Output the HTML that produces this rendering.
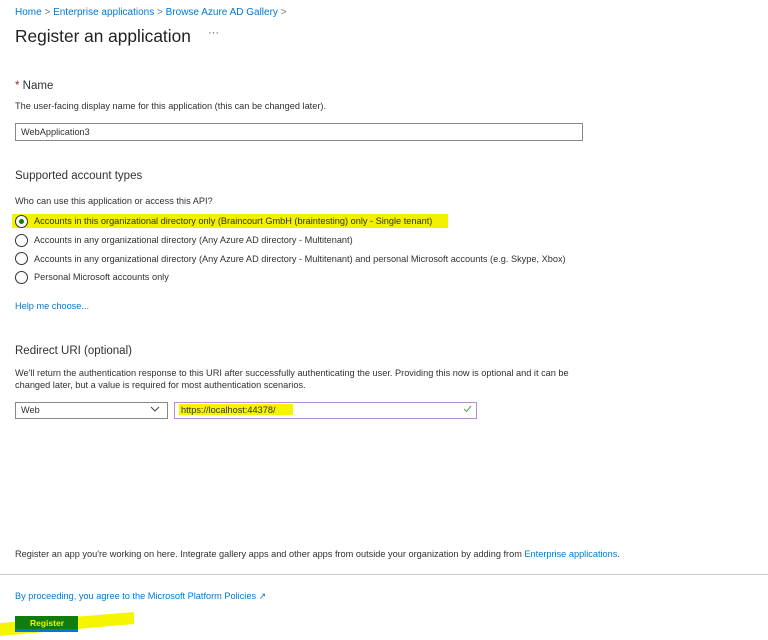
<!DOCTYPE html>
<html><head><meta charset="utf-8"><style>
body{margin:0;width:768px;height:640px;background:#fff;font-family:"Liberation Sans",sans-serif;color:#323130;position:relative;overflow:hidden}
.a{position:absolute;white-space:nowrap}
.s{font-size:9.2px}
.l{color:#0078d4}
.h{font-size:11.5px}
.r{position:absolute;left:15px;width:11px;height:11px;border:1px solid #323130;border-radius:50%}
</style></head><body>
<div class="a l" style="left:15px;top:7px;font-size:10px">Home <span style="color:#777">&gt;</span> Enterprise applications <span style="color:#777">&gt;</span> Browse Azure AD Gallery <span style="color:#777">&gt;</span></div>
<div class="a" style="left:15px;top:26px;font-size:17.3px;color:#222">Register an application</div>
<div class="a" style="left:208px;top:27px;font-size:11px;color:#555">···</div>
<div class="a h" style="left:15px;top:80px"><span style="color:#a4262c">*</span> Name</div>
<div class="a s" style="left:15px;top:101px">The user-facing display name for this application (this can be changed later).</div>
<div class="a" style="left:15px;top:123px;width:566px;height:16px;border:1px solid #8a8886"></div>
<div class="a s" style="left:21px;top:127px">WebApplication3</div>
<div class="a h" style="left:15px;top:170px">Supported account types</div>
<div class="a s" style="left:15px;top:196px">Who can use this application or access this API?</div>
<div class="a" style="left:12px;top:214px;width:436px;height:14px;background:#f2f200"></div>
<div class="r" style="top:215px;background:#fff"><div style="position:absolute;left:3px;top:3px;width:5px;height:5px;border-radius:50%;background:#107c10"></div></div>
<div class="a s" style="left:34px;top:216px">Accounts in this organizational directory only (Braincourt GmbH (braintesting) only - Single tenant)</div>
<div class="r" style="top:234px"></div>
<div class="a s" style="left:34px;top:235px">Accounts in any organizational directory (Any Azure AD directory - Multitenant)</div>
<div class="r" style="top:252px"></div>
<div class="a s" style="left:34px;top:254px">Accounts in any organizational directory (Any Azure AD directory - Multitenant) and personal Microsoft accounts (e.g. Skype, Xbox)</div>
<div class="r" style="top:271px"></div>
<div class="a s" style="left:34px;top:272px">Personal Microsoft accounts only</div>
<div class="a s l" style="left:15px;top:301px">Help me choose...</div>
<div class="a h" style="left:15px;top:345px">Redirect URI (optional)</div>
<div class="a s" style="left:15px;top:367px;line-height:12px">We'll return the authentication response to this URI after successfully authenticating the user. Providing this now is optional and it can be<br>changed later, but a value is required for most authentication scenarios.</div>
<div class="a" style="left:15px;top:402px;width:151px;height:15px;border:1px solid #8a8886"></div>
<div class="a s" style="left:21px;top:405px">Web</div>
<svg class="a" style="left:150px;top:406px" width="10" height="7"><path d="M1 1l4 4 4-4" fill="none" stroke="#444" stroke-width="1"/></svg>
<div class="a" style="left:174px;top:402px;width:301px;height:15px;border:1px solid #b98bd0"></div>
<div class="a" style="left:179px;top:404px;width:114px;height:11px;background:#f5f500"></div>
<div class="a s" style="left:181px;top:405px">https://localhost:44378/</div>
<svg class="a" style="left:463px;top:405px" width="9" height="8"><path d="M1 4l2.5 2.5L8 1" fill="none" stroke="#57a64a" stroke-width="1"/></svg>
<div class="a s" style="left:15px;top:549px">Register an app you're working on here. Integrate gallery apps and other apps from outside your organization by adding from <span class="l">Enterprise applications</span>.</div>
<div class="a" style="left:0;top:574px;width:768px;height:1px;background:#ccc"></div>
<div class="a s l" style="left:15px;top:591px">By proceeding, you agree to the Microsoft Platform Policies &#x2197;</div>
<svg class="a" style="left:0;top:606px" width="140" height="30"><path d="M0 17L134 6 134 18 0 30Z" fill="#f5f500"/></svg>
<div class="a" style="left:15px;top:616px;width:63px;height:16px;background:#0078d4"></div>
<div class="a" style="left:15px;top:616px;width:63px;height:13px;background:#107c10"></div>
<div class="a" style="left:30px;top:618px;font-size:8.5px;font-weight:bold;color:#f2f200">Register</div>
</body></html>
